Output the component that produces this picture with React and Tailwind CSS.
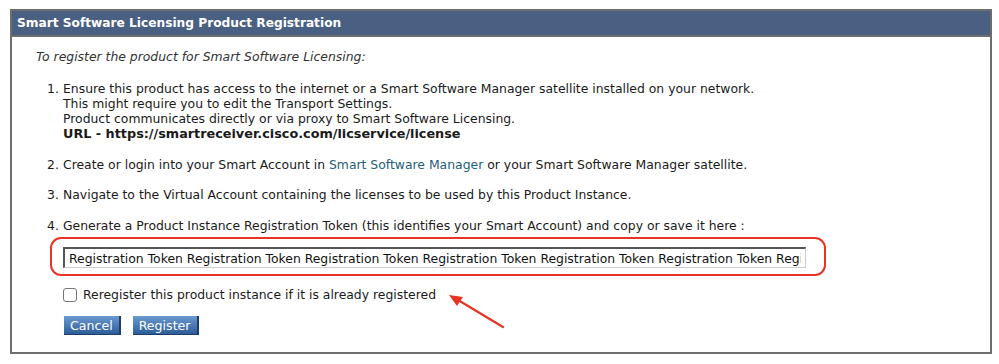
export default function App() {
    const token = 'Registration Token Registration Token Registration Token Registration Token Registration Token Registration Token Registration Token Registration Token';

    return (
        <div className="relative w-[999px] h-[364px] bg-white pt-[9px] pl-[10px] font-['DejaVu_Sans',Verdana,sans-serif] text-[12.4px] leading-[15px] text-[#1a1a1a]">
            <div className="w-[982px] h-[345px] border-2 border-[#6e6e6e]">
                {/* Title bar */}
                <div className="h-[26px] bg-[#4a6083] border-b-2 border-[#6e6e6e] flex items-center px-[5px] text-white font-bold text-[12.2px]">
                    Smart Software Licensing Product Registration
                </div>

                <div className="pl-[24px] pt-[12px]">
                    <p className="italic text-[#333]">To register the product for Smart Software Licensing:</p>

                    <ol className="mt-[17px] pl-[11px]">
                        <li className="flex mt-[1px]">
                            <span className="w-[16px]">1.</span>
                            <div>
                                <div>Ensure this product has access to the internet or a Smart Software Manager satellite installed on your network.</div>
                                <div>This might require you to edit the Transport Settings.</div>
                                <div>Product communicates directly or via proxy to Smart Software Licensing.</div>
                                <div className="font-bold text-[12.8px]">URL - https://smartreceiver.cisco.com/licservice/license</div>
                            </div>
                        </li>
                        <li className="flex mt-[16px]">
                            <span className="w-[16px]">2.</span>
                            <div>
                                Create or login into your Smart Account in{' '}
                                <a className="text-[#245e78]">Smart Software Manager</a> or your Smart Software Manager satellite.
                            </div>
                        </li>
                        <li className="flex mt-[15px]">
                            <span className="w-[16px]">3.</span>
                            <div>Navigate to the Virtual Account containing the licenses to be used by this Product Instance.</div>
                        </li>
                        <li className="flex mt-[16px]">
                            <span className="w-[16px]">4.</span>
                            <div>Generate a Product Instance Registration Token (this identifies your Smart Account) and copy or save it here :</div>
                        </li>
                    </ol>

                    <div className="pl-[27px]">
                        <input
                            readOnly
                            value={token}
                            className="mt-[14px] block w-[743px] h-[21px] px-[4px] bg-white text-[12.4px] text-[#111] font-['DejaVu_Sans',Verdana,sans-serif] border-t-2 border-l-2 border-t-[#555] border-l-[#555] border-r border-b border-r-[#ccc] border-b-[#ccc] outline-none"
                        />

                        <label className="mt-[19px] flex items-center gap-[6px]">
                            <span className="w-[14px] h-[14px] rounded-[3px] border border-[#777] bg-white"></span>
                            <span>Reregister this product instance if it is already registered</span>
                        </label>

                        <div className="mt-[14px] flex gap-[12px] ml-[1px]">
                            <button className="h-[19px] px-[6px] text-white text-[12.6px] leading-[17px] bg-gradient-to-b from-[#6b9ad2] to-[#2d5d98] border-r-2 border-b border-[#1d3e66]">Cancel</button>
                            <button className="h-[19px] px-[6px] text-white text-[12.6px] leading-[17px] bg-gradient-to-b from-[#6b9ad2] to-[#2d5d98] border-r-2 border-b border-[#1d3e66]">Register</button>
                        </div>
                    </div>
                </div>
            </div>

            {/* Annotation: highlight around the token field */}
            <div className="absolute left-[50px] top-[237px] w-[776px] h-[39px] rounded-[11px] border-2 border-[#e63426]"></div>

            {/* Annotation: arrow */}
            <svg className="absolute left-0 top-0" width="999" height="364" viewBox="0 0 999 364">
                <line x1="503" y1="327" x2="458" y2="300" stroke="#e63426" strokeWidth="2.2" strokeLinecap="round" />
                <polygon points="449,295 463,297 457,306" fill="#e63426" />
            </svg>
        </div>
    );
}
